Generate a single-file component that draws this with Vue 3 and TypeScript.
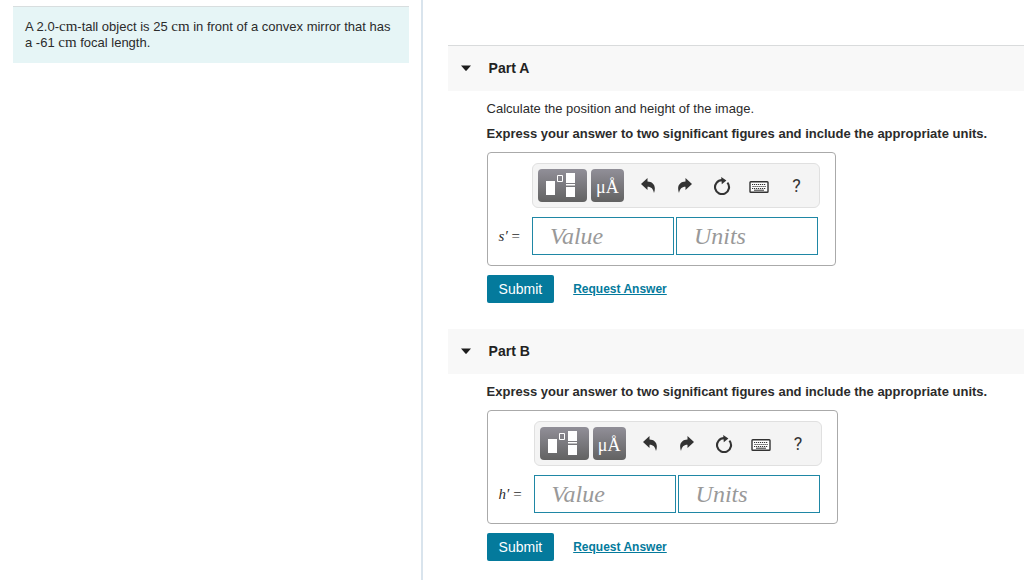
<script setup lang="ts">
import { reactive } from 'vue'

interface Part {
  id: string
  title: string
  intro?: string
  symbol: string
  value: string
  units: string
  open: boolean
}

const instruction =
  'Express your answer to two significant figures and include the appropriate units.'

const parts = reactive<Part[]>([
  {
    id: 'a',
    title: 'Part A',
    intro: 'Calculate the position and height of the image.',
    symbol: 's',
    value: '',
    units: '',
    open: true,
  },
  { id: 'b', title: 'Part B', symbol: 'h', value: '', units: '', open: true },
])

function reset(part: Part) {
  part.value = ''
  part.units = ''
}
</script>

<template>
  <div class="page">
    <aside class="problem">
      <p class="statement">
        A 2.0-<span class="unit">cm</span>-tall object is 25 <span class="unit">cm</span> in front of a
        convex mirror that has a -61 <span class="unit">cm</span> focal length.
      </p>
    </aside>

    <main class="parts">
      <section v-for="part in parts" :key="part.id" class="part">
        <h2 class="part-header">
          <button
            type="button"
            class="toggle"
            :aria-expanded="part.open"
            @click="part.open = !part.open"
          >
            <svg class="caret" viewBox="0 0 10 6" aria-hidden="true"><path d="M0 0.5H10L5.6 5.6Q5 6.2 4.4 5.6Z" /></svg>
            <span>{{ part.title }}</span>
          </button>
        </h2>

        <div v-show="part.open" class="part-body">
          <p v-if="part.intro" class="intro">{{ part.intro }}</p>
          <p class="instruction">{{ instruction }}</p>

          <form @submit.prevent>
            <div class="answer">
              <div class="toolbar" role="toolbar" aria-label="Answer tools">
                <button type="button" class="dark templates" aria-label="Templates">
                  <svg viewBox="0 0 49 33" aria-hidden="true">
                    <path d="M8 12h9v14H8zM28 4h9v10h-9zM28 18h9v10h-9zM28 15h9v1.5h-9z" fill="#fff" />
                    <path d="M19.5 6.5h5v6h-5z" fill="none" stroke="#fff" />
                  </svg>
                </button>
                <button type="button" class="dark symbols" aria-label="Symbols">μÅ</button>
                <button type="button" class="tool" aria-label="Undo">
                  <svg viewBox="0 0 16 16" aria-hidden="true">
                    <path d="M1 6L7.5 0V3.4C13 3.6 16.6 7.6 14 15C13 10.8 11.5 8.9 7.5 8.8V12Z" />
                  </svg>
                </button>
                <button type="button" class="tool" aria-label="Redo">
                  <svg viewBox="0 0 16 16" aria-hidden="true">
                    <path d="M15 6L8.5 0V3.4C3 3.6 -0.6 7.6 2 15C3 10.8 4.5 8.9 8.5 8.8V12Z" />
                  </svg>
                </button>
                <button type="button" class="tool reset" aria-label="Reset" @click="reset(part)">
                  <svg viewBox="0 0 18 18" aria-hidden="true">
                    <path d="M14.4 5.6A7 7 0 1 1 9 3.1" fill="none" stroke="currentColor" stroke-width="2.1" />
                    <path d="M8.2 0L13.4 3.6L8.8 7.2Z" />
                  </svg>
                </button>
                <button type="button" class="tool keyboard" aria-label="Keyboard shortcuts">
                  <svg viewBox="0 0 20 12" aria-hidden="true">
                    <rect x="1" y="0.7" width="18" height="10.6" rx="0.8" fill="#fff" stroke="currentColor" stroke-width="1.4" />
                    <path d="M3 3.5H17M3.5 5.5H17M3 7.5H17" fill="none" stroke="currentColor" stroke-width="1.1" stroke-dasharray="1.2 0.8" />
                    <path d="M5 9.2H15" fill="none" stroke="currentColor" />
                  </svg>
                </button>
                <button type="button" class="tool help" aria-label="Help">?</button>
              </div>

              <label class="symbol" :for="`value-${part.id}`"><i>{{ part.symbol }}</i><i>′</i> =</label>
              <div class="fields">
                <input :id="`value-${part.id}`" v-model="part.value" type="text" placeholder="Value" autocomplete="off" />
                <input v-model="part.units" type="text" placeholder="Units" aria-label="Units" autocomplete="off" />
              </div>
            </div>

            <div class="actions">
              <button type="submit" class="submit">Submit</button>
              <a href="#" class="request" @click.prevent>Request Answer</a>
            </div>
          </form>
        </div>
      </section>
    </main>
  </div>
</template>

<style>
body {
  margin: 0;
  background: #fff;
}
</style>

<style scoped>
.page {
  display: grid;
  grid-template-columns: 26fr 37fr;
  min-height: 100vh;
  box-sizing: border-box;
  color: #2b2b2b;
  font: 13px/16px "Liberation Sans", Arial, sans-serif;
}

.problem {
  padding: 6px 12px 0 13px;
  border-right: 2px solid #d9e4ed;
}

.statement {
  margin: 0;
  padding: 12px 12px 12px;
  border-top: 1px solid #d8dedf;
  background: #e6f5f6;
}

.unit {
  font: 15px/12px "Liberation Serif", "Times New Roman", serif;
}

.parts {
  padding: 45px 0 0 25px;
}

.part + .part {
  margin-top: 26px;
}

.part-header {
  margin: 0;
  background: #f8f8f8;
  font-size: 14px;
}

.part:first-child .part-header {
  border-top: 1px solid #d9dbdc;
}

.toggle {
  display: flex;
  align-items: center;
  gap: 18px;
  width: 100%;
  height: 45px;
  padding: 0 13px 2px;
  border: 0;
  background: none;
  color: #222;
  font: bold 14px/16px "Liberation Sans", Arial, sans-serif;
  text-align: left;
  cursor: pointer;
}

.caret {
  width: 10px;
  height: 6px;
  fill: #1d1d1d;
}

.part-body {
  padding: 10px 0 0 39px;
}

.intro {
  margin: 0 0 9px;
}

.instruction {
  margin: 0 0 10px;
  font-weight: bold;
}

.answer {
  display: grid;
  grid-template-columns: auto auto;
  gap: 9px 12px;
  align-items: center;
  width: max-content;
  padding: 10px 15px 10px 11px;
  border: 1px solid #aaa;
  border-radius: 4px;
}

.toolbar {
  grid-column: 2;
  display: flex;
  align-items: center;
  box-sizing: border-box;
  height: 45px;
  padding: 0 4px 0 5px;
  border: 1px solid #e0e0e0;
  border-radius: 6px;
  background: #f4f4f4;
}

.toolbar button {
  flex: none;
  padding: 0;
  border: 0;
  background: none;
  color: #333;
  cursor: pointer;
}

.toolbar svg {
  display: block;
  margin: auto;
  fill: currentColor;
}

.toolbar .dark {
  height: 33px;
  margin-right: 4px;
  border-radius: 4px;
  background: linear-gradient(#918f98, #626262);
  color: #fff;
}

.toolbar .templates,
.toolbar .templates svg {
  width: 49px;
  height: 33px;
}

.toolbar .symbols {
  width: 33px;
  margin-right: 6px;
  padding-top: 2px;
  font: 18px/30px "Liberation Serif", "Times New Roman", serif;
}

.tool {
  width: 37px;
  height: 32px;
}

.tool svg {
  width: 16px;
  height: 16px;
}

.toolbar .reset svg {
  width: 18px;
  height: 18px;
}

.toolbar .keyboard svg {
  width: 20px;
  height: 12px;
}

.toolbar .keyboard {
  padding-top: 3px;
}

.toolbar .help {
  font: 18px/32px Roboto, Arial, sans-serif;
}

.symbol {
  font: 15px/20px "Liberation Serif", "Times New Roman", serif;
  white-space: nowrap;
}

.fields {
  display: flex;
  gap: 2px;
}

.fields input {
  box-sizing: border-box;
  width: 142px;
  height: 38px;
  padding: 0 17px;
  border: 1px solid #1f87a5;
  border-radius: 0;
  background: #fff;
  color: #333;
  font: italic 24px/36px "Liberation Serif", "Times New Roman", serif;
}

.fields input::placeholder {
  color: #999;
  opacity: 1;
}

.actions {
  display: flex;
  align-items: center;
  gap: 19px;
  margin-top: 9px;
}

.submit {
  height: 28px;
  padding: 0 12px 1px;
  border: 0;
  border-radius: 2px;
  background: #047a9c;
  color: #fff;
  font: 14px/26px "Liberation Sans", Arial, sans-serif;
  cursor: pointer;
}

.request {
  color: #047a9c;
  font-size: 12px;
  font-weight: bold;
}
</style>
